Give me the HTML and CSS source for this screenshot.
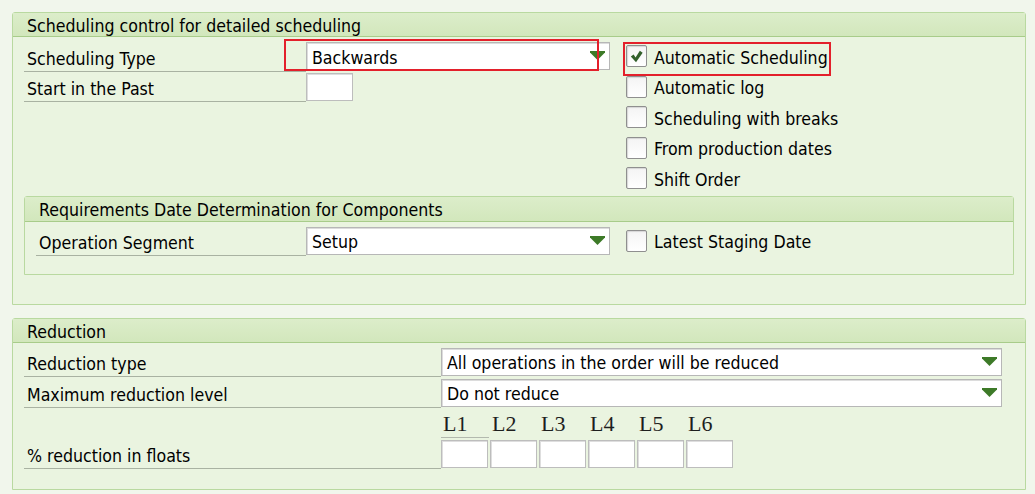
FILE: index.html
```html
<!DOCTYPE html>
<html>
<head>
<meta charset="utf-8">
<link rel="stylesheet" href="styles.css">
</head>
<body>
<div class="page">
  <section class="group g1">
    <div class="group-header">Scheduling control for detailed scheduling</div>
    <div class="group-body g1-body">
      <div class="sched">
        <div class="col-left">
          <div class="row">
            <div class="label l-outer">Scheduling Type</div>
            <div class="dd w-mid">Backwards<svg class="arrow" viewBox="0 0 15 9" width="15" height="9"><path d="M0 0H15V1.5L7.5 9L0 1.5Z" fill="#3d7a28"/></svg></div>
          </div>
          <div class="row">
            <div class="label l-outer">Start in the Past</div>
            <div class="box"></div>
          </div>
        </div>
        <div class="col-right">
          <div class="row"><span class="cb"><svg viewBox="0 0 20 20" width="20" height="20"><path d="M4 10.5L7 8.5L9 11.5L13.5 4.5L16.5 6.5L9.5 16.5Z" fill="#33602b"/></svg></span><span class="cb-label">Automatic Scheduling</span></div>
          <div class="row"><span class="cb"></span><span class="cb-label">Automatic log</span></div>
          <div class="row"><span class="cb"></span><span class="cb-label">Scheduling with breaks</span></div>
          <div class="row"><span class="cb"></span><span class="cb-label">From production dates</span></div>
          <div class="row"><span class="cb"></span><span class="cb-label">Shift Order</span></div>
        </div>
      </div>
      <section class="group inner">
        <div class="group-header">Requirements Date Determination for Components</div>
        <div class="group-body inner-body">
          <div class="row">
            <div class="label l-inner">Operation Segment</div>
            <div class="dd w-mid">Setup<svg class="arrow" viewBox="0 0 15 9" width="15" height="9"><path d="M0 0H15V1.5L7.5 9L0 1.5Z" fill="#3d7a28"/></svg></div>
            <span class="cb cb-gap"></span><span class="cb-label">Latest Staging Date</span>
          </div>
        </div>
      </section>
    </div>
  </section>

  <section class="group g2">
    <div class="group-header">Reduction</div>
    <div class="group-body g2-body">
      <div class="red-grid">
        <div class="label l-wide">Reduction type</div>
        <div class="dd w-wide">All operations in the order will be reduced<svg class="arrow" viewBox="0 0 15 9" width="15" height="9"><path d="M0 0H15V1.5L7.5 9L0 1.5Z" fill="#3d7a28"/></svg></div>
        <div class="label l-wide">Maximum reduction level</div>
        <div class="dd w-wide">Do not reduce<svg class="arrow" viewBox="0 0 15 9" width="15" height="9"><path d="M0 0H15V1.5L7.5 9L0 1.5Z" fill="#3d7a28"/></svg></div>
        <div class="blank"></div>
        <div class="levels">
          <span class="lv first">L1</span><span class="lv">L2</span><span class="lv">L3</span><span class="lv">L4</span><span class="lv">L5</span><span class="lv">L6</span>
        </div>
        <div class="label l-wide">% reduction in floats</div>
        <div class="boxes">
          <span class="box"></span><span class="box"></span><span class="box"></span><span class="box"></span><span class="box"></span><span class="box"></span>
        </div>
      </div>
    </div>
  </section>

  <div class="mark mark1"></div>
  <div class="mark mark2"></div>
</div>
</body>
</html>
```

FILE: styles.css
```css
html, body {
  margin: 0;
  padding: 0;
  background: #f1f6ec;
}
body {
  font-family: "DejaVu Sans Condensed", "DejaVu Sans", sans-serif;
  font-stretch: condensed;
  font-size: 17.6px;
  color: #000;
  width: 1035px;
  height: 494px;
  overflow: hidden;
}
.page {
  position: relative;
  padding: 12px 9px 0 12px;
}
.group {
  border: 1px solid #b9d9a0;
  border-radius: 3px 3px 0 0;
  background: #eaf4e0;
}
.group-header {
  height: 21px;
  padding-top: 2px;
  line-height: 23px;
  padding-left: 14px;
  background: linear-gradient(#dcedca, #d2e7bc);
  border-bottom: 1px solid #a8cc8a;
  white-space: nowrap;
}
.g1 { height: 291px; }
.g1-body { padding: 4px 11px 0 11px; }
.sched { display: flex; }
.col-left { width: 586px; }
.col-right { margin-left: 16px; }
.row {
  display: flex;
  align-items: center;
  height: 30.5px;
}
.label {
  box-sizing: border-box;
  height: 100%;
  display: flex;
  align-items: center;
  padding-left: 3px;
  padding-top: 6px;
  border-bottom: 1px solid #a9b2a2;
  white-space: nowrap;
}
.l-outer { width: 282px; }
.l-inner { width: 270px; }
.l-wide { width: 417px; }
.dd {
  box-sizing: border-box;
  position: relative;
  height: 28px;
  background: #fff;
  border: 1px solid #b7b7b7;
  box-shadow: inset 1px 1px 0 #dcdcdc;
  padding-left: 5px;
  padding-top: 3px;
  display: flex;
  align-items: center;
  white-space: nowrap;
}
.w-mid { width: 304px; }
.w-wide { width: 561px; }
.arrow {
  position: absolute;
  right: 4px;
  top: 8px;
}
.box {
  box-sizing: border-box;
  display: block;
  width: 47px;
  height: 28px;
  background: #fff;
  border: 1px solid #bdbdbd;
  box-shadow: inset 1px 1px 0 #dedede;
}
.cb {
  box-sizing: border-box;
  display: flex;
  align-items: center;
  justify-content: center;
  width: 21px;
  height: 22px;
  background: linear-gradient(#f4f4f4, #ffffff);
  border: 1px solid #8f8f8f;
  border-radius: 2px;
  box-shadow: inset 1px 1px 1px #d6d6d6;
}
.cb-label {
  margin-left: 7px;
  padding-top: 3px;
  white-space: nowrap;
}
.cb-gap { margin-left: 16px; }
.inner {
  margin-top: 2px;
  height: 77px;
}
.inner-body { padding: 4px 11px 0 11px; }
.inner .group-header { height: 22px; }
.g2 {
  margin-top: 13px;
  height: 170px;
}
.g2-body { padding: 3px 0 0 11px; }
.red-grid {
  display: grid;
  grid-template-columns: 417px auto;
  grid-template-rows: 31px 31px 30px 31px;
  align-items: center;
}
.red-grid .label { height: 100%; }
.blank { height: 100%; }
.levels {
  display: flex;
  gap: 2px;
  align-self: stretch;
  align-items: flex-end;
}
.lv {
  box-sizing: border-box;
  width: 47px;
  height: 29px;
  padding-left: 2px;
  font-family: "Liberation Serif", serif;
  font-size: 22px;
  line-height: 30px;
  color: #1e1e1e;
}
.lv.first { border-bottom: 1px solid #b3b9ae; width: 48px; margin-right: -1px; }
.boxes {
  display: flex;
  gap: 2px;
}
.mark {
  position: absolute;
  box-sizing: border-box;
  border: 2px solid #e3202b;
}
.mark1 { left: 284px; top: 39px; width: 315px; height: 32px; }
.mark2 { left: 623px; top: 42px; width: 208px; height: 34px; }
```
